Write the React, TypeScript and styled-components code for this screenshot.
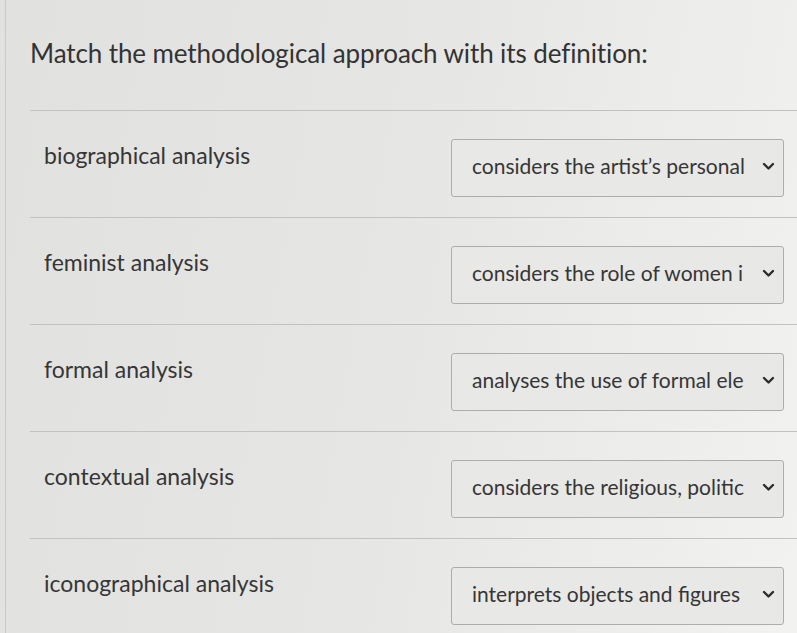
import React from "react";
import styled, { createGlobalStyle } from "styled-components";

const Global = createGlobalStyle`
  html, body { margin: 0; padding: 0; }
  body {
    width: 797px;
    height: 633px;
    overflow: hidden;
    font-family: Lato, "Open Sans", sans-serif;
    background: linear-gradient(100deg, #e1e1e0 0%, #e5e5e4 45%, #ededec 80%, #f2f2f1 100%);
    color: #353535;
  }
`;

const Frame = styled.div`
  margin-left: 5px;
  border-left: 1px solid #c9c9c8;
  min-height: 633px;
  box-sizing: border-box;
`;

const Page = styled.div`
  padding: 38px 0 0 24px;
`;

const Title = styled.h1`
  margin: 0 0 42px 0;
  font-size: 26px;
  line-height: 30px;
  font-weight: 400;
  color: #333333;
  letter-spacing: -0.1px;
`;

const List = styled.div`
  display: flex;
  flex-direction: column;
`;

const Row = styled.div`
  display: grid;
  grid-template-columns: 421px 333px;
  align-items: start;
  height: 107px;
  box-sizing: border-box;
  border-top: 1px solid #c2c2c1;
  padding-top: 28px;
`;

const Label = styled.div`
  padding: 2px 0 0 14px;
  font-size: 23px;
  line-height: 28px;
  color: #363636;
  white-space: nowrap;
`;

const Select = styled.div`
  box-sizing: border-box;
  height: 58px;
  border: 1px solid #adadac;
  border-radius: 3px;
  background: #e8e8e7;
  display: flex;
  align-items: center;
  padding: 0 8px 4px 20px;
  gap: 6px;
`;

const SelectText = styled.span`
  flex: 1;
  min-width: 0;
  font-size: 21px;
  line-height: 26px;
  white-space: nowrap;
  overflow: hidden;
  color: #363636;
`;

const Chevron = styled.svg`
  width: 13px;
  height: 10px;
  flex: none;
`;

const rows: [string, string][] = [
  ["biographical analysis", "considers the artist\u2019s personal"],
  ["feminist analysis", "considers the role of women i"],
  ["formal analysis", "analyses the use of formal ele"],
  ["contextual analysis", "considers the religious, politic"],
  ["iconographical analysis", "interprets objects and figures"],
];

const ChevronIcon = () => (
  <Chevron viewBox="0 0 13 10">
    <path d="M2 3 L6.5 7.5 L11 3" fill="none" stroke="#2c2c2c" strokeWidth="2.4" strokeLinecap="round" strokeLinejoin="round" />
  </Chevron>
);

export default function App() {
  return (
    <>
      <Global />
      <Frame>
        <Page>
          <Title>Match the methodological approach with its definition:</Title>
          <List>
            {rows.map(([a, b]) => (
              <Row key={a}>
                <Label>{a}</Label>
                <Select>
                  <SelectText>{b}</SelectText>
                  <ChevronIcon />
                </Select>
              </Row>
            ))}
          </List>
        </Page>
      </Frame>
    </>
  );
}
